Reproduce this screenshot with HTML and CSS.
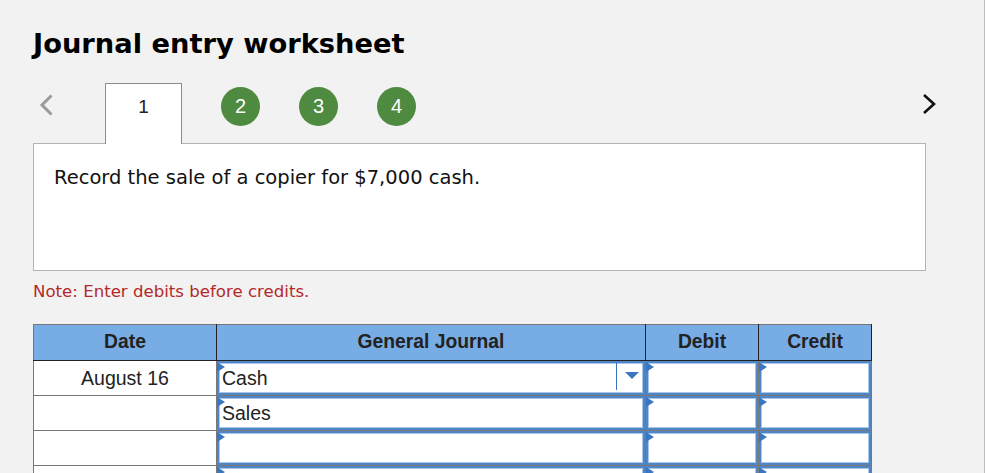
FILE: index.html
```html
<!DOCTYPE html>
<html lang="en">
<head>
<meta charset="utf-8">
<title>Journal entry worksheet</title>
<link rel="stylesheet" href="styles.css">
</head>
<body>
<div class="page">
  <h1 class="title">Journal entry worksheet</h1>
  <div class="tabs">
    <svg class="nav prev" width="16" height="22" viewBox="0 0 16 22"><polyline points="13.5,1.5 4,11 13.5,20.5" fill="none" stroke="#9a9a9a" stroke-width="3"/></svg>
    <div class="tab">1</div>
    <div class="step">2</div>
    <div class="step">3</div>
    <div class="step">4</div>
    <svg class="nav next" width="16" height="22" viewBox="0 0 16 22"><polyline points="2,2 12,11 2,20" fill="none" stroke="#111" stroke-width="2.6"/></svg>
  </div>
  <div class="question">
    <p>Record the sale of a copier for $7,000 cash.</p>
  </div>
  <p class="note">Note: Enter debits before credits.</p>
  <table class="journal">
    <colgroup>
      <col class="c-date"><col class="c-gj"><col class="c-dr"><col class="c-cr">
    </colgroup>
    <thead>
      <tr><th>Date</th><th>General Journal</th><th>Debit</th><th>Credit</th></tr>
    </thead>
    <tbody>
      <tr>
        <td class="date">August 16</td>
        <td class="in"><div class="field"><span class="flag"></span>Cash<span class="sep"></span><span class="caret"></span></div></td>
        <td class="in"><div class="field"><span class="flag"></span></div></td>
        <td class="in"><div class="field"><span class="flag"></span></div></td>
      </tr>
      <tr>
        <td class="date"></td>
        <td class="in"><div class="field"><span class="flag"></span>Sales</div></td>
        <td class="in"><div class="field"><span class="flag"></span></div></td>
        <td class="in"><div class="field"><span class="flag"></span></div></td>
      </tr>
      <tr>
        <td class="date"></td>
        <td class="in"><div class="field"><span class="flag"></span></div></td>
        <td class="in"><div class="field"><span class="flag"></span></div></td>
        <td class="in"><div class="field"><span class="flag"></span></div></td>
      </tr>
      <tr>
        <td class="date"></td>
        <td class="in"><div class="field"><span class="flag"></span></div></td>
        <td class="in"><div class="field"><span class="flag"></span></div></td>
        <td class="in"><div class="field"><span class="flag"></span></div></td>
      </tr>
    </tbody>
  </table>
</div>
</body>
</html>
```
FILE: styles.css
```css
* { box-sizing: border-box; }
html, body { margin: 0; padding: 0; }
body {
  background: #f2f2f2;
  font-family: "DejaVu Sans", Verdana, sans-serif;
  color: #111;
  overflow: hidden;
}
.page {
  width: 985px;
  height: 473px;
  padding: 28px 45px 0 33px;
  border-right: 1px solid #bdbdbd;
  overflow: hidden;
}
.title {
  margin: 0;
  font-size: 27.3px;
  line-height: 32px;
  font-weight: bold;
  color: #000;
}
.tabs {
  margin-top: 23px;
  height: 60px;
  display: flex;
  align-items: flex-start;
}
.nav { display: block; flex: none; }
.prev { margin-left: 5px; margin-top: 11px; }
.next { margin-left: auto; margin-top: 10px; margin-right: 1px; }
.tab {
  position: relative;
  z-index: 1;
  margin-left: 51px;
  width: 77px;
  height: 61px;
  background: #fff;
  border: 1px solid #8c8c8c;
  border-bottom: none;
  text-align: center;
  padding-top: 13px;
  font-family: "Liberation Sans", Arial, sans-serif;
  font-size: 19px;
  line-height: 20px;
  color: #222;
}
.step {
  margin-left: 39px;
  margin-top: 4px;
  width: 39px;
  height: 39px;
  border-radius: 50%;
  background: #4e8a3f;
  color: #fff;
  display: flex;
  align-items: center;
  justify-content: center;
  font-family: "Liberation Sans", Arial, sans-serif;
  font-size: 20px;
}
.question {
  width: 893px;
  height: 128px;
  background: #fff;
  border: 1px solid #b4b4b4;
  padding: 22px 20px 0;
}
.question p {
  margin: 0;
  font-size: 19.5px;
  line-height: 24px;
  color: #111;
}
.note {
  margin: 11px 0 0;
  font-size: 16.6px;
  line-height: 20px;
  color: #b32a2a;
}
.journal {
  margin-top: 22px;
  border-collapse: collapse;
  table-layout: fixed;
  width: 838px;
  font-family: "Liberation Sans", Arial, sans-serif;
  color: #222;
}
.c-date { width: 183px; }
.c-gj { width: 429px; }
.c-dr { width: 113px; }
.c-cr { width: 113px; }
.journal th {
  height: 36px;
  padding: 0 0 1px;
  background: #78ace4;
  font-size: 19.3px;
  font-weight: bold;
  line-height: 22px;
  text-align: center;
  border-top: 1px solid #777;
  border-right: 1px solid #222;
  border-bottom: 1px solid #222;
  border-left: 1px solid #222;
}
.journal th:first-child { border-left: 1px solid #777; }
.journal td {
  height: 34px;
  padding: 0;
  background: #fff;
  border: 1px solid #777;
  font-size: 19.5px;
  line-height: 22px;
}
.journal td.date { text-align: center; vertical-align: middle; padding-top: 0; }
.journal td.in { vertical-align: top; }
.field {
  position: relative;
  height: 34px;
  border: 2px solid #5086c6;
  box-shadow: inset 0 0 0 1px #a8c6ea;
  padding: 4px 0 0 3px;
  background: #fff;
}
.flag {
  position: absolute;
  z-index: 2;
  left: -2px;
  top: -1px;
  width: 0;
  height: 0;
  border-left: 8px solid #3a77c2;
  border-top: 5.5px solid transparent;
  border-bottom: 5.5px solid transparent;
}
.sep {
  position: absolute;
  right: 26px;
  top: 0;
  bottom: 3px;
  width: 1px;
  background: #3a70b5;
}
.caret {
  position: absolute;
  right: 4px;
  top: 9px;
  width: 0;
  height: 0;
  border-top: 7px solid #3b78c3;
  border-left: 7.5px solid transparent;
  border-right: 7.5px solid transparent;
}
```
